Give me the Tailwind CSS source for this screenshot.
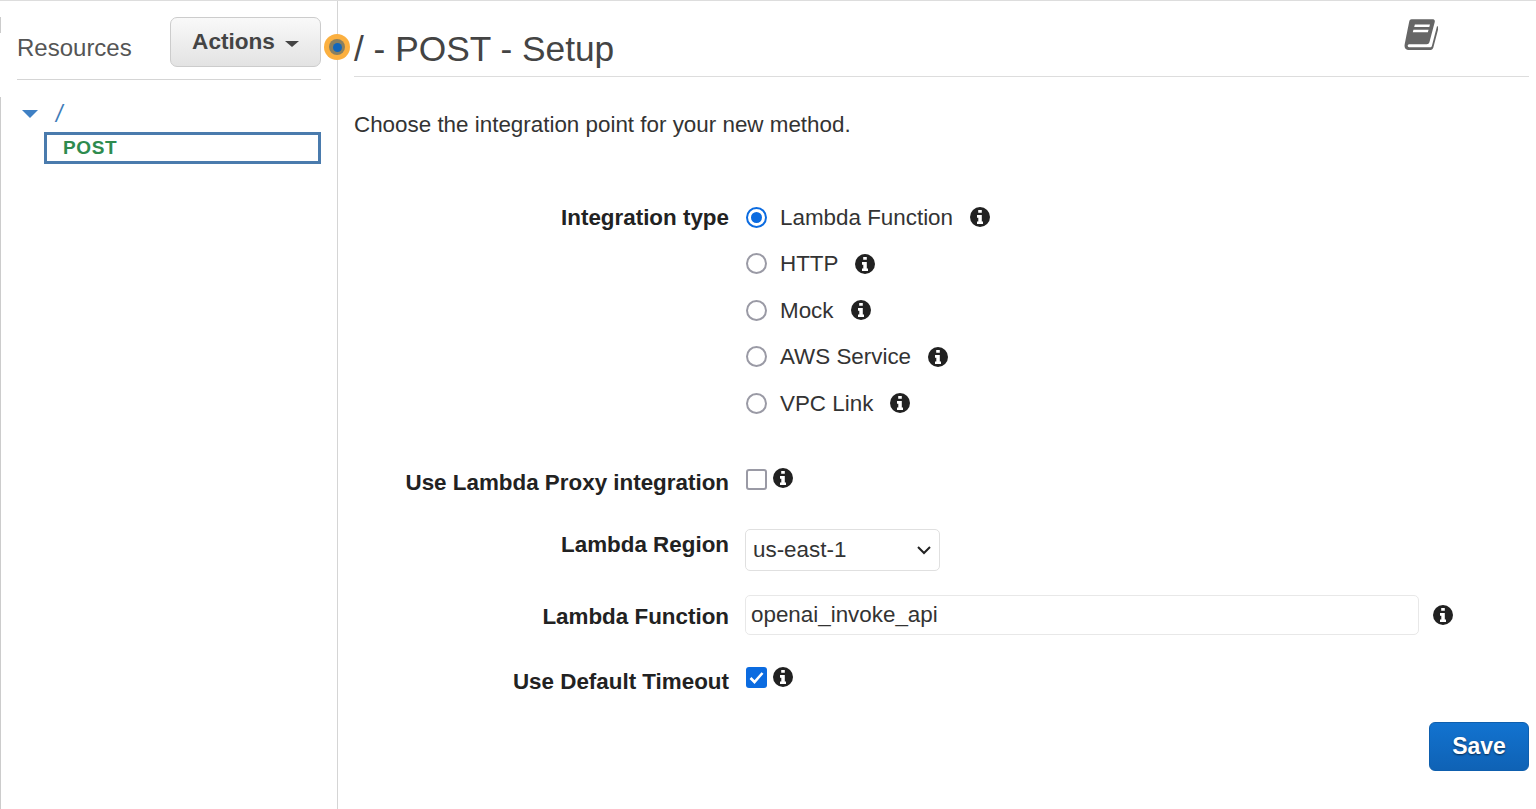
<!DOCTYPE html>
<html lang="en">
<head>
  <meta charset="UTF-8" />
  <title>API Gateway - POST Setup</title>
  <script src="https://cdn.jsdelivr.net/npm/@tailwindcss/browser@4"></script>
</head>
<body class="bg-white h-[809px] overflow-hidden font-['Liberation_Sans',Arial,sans-serif] text-[#222]">

<svg class="hidden">
  <symbol id="info" viewBox="0 0 20 20">
    <circle cx="10" cy="10" r="10" fill="#212121" />
    <path fill="#fff" d="M8.2 2.9h3.6v2.9H8.2zM7 8h4.8v6.4H13v2.7H7v-2.700h1.300v-3.700H7z" />
  </symbol>
</svg>

<div class="flex h-full border-t border-[#ddd]">
  <!-- resources tree -->
  <aside class="relative w-[338px] shrink-0 h-full pl-[17px] pr-4 pt-4 border-r border-[#d5d5d5]">
    <div class="absolute left-0 top-4 w-px h-4 bg-[#ccc]"></div>
    <div class="absolute left-0 top-24 bottom-0 w-px bg-[#ccc]"></div>
    <div class="flex items-center justify-between h-[63px] border-b border-[#d5d5d5] pb-[13px]">
      <span class="text-[24px] text-[#555] mt-[13px]">Resources</span>
      <button class="w-[151px] h-[50px] mt-0 rounded-[7px] border border-[#ccc] bg-gradient-to-b from-[#f9f9f9] to-[#e3e3e3] text-[22.600px] font-bold text-[#444] flex items-center justify-center gap-[10px]">
        Actions
        <span class="w-0 h-0 border-x-[7px] border-x-transparent border-t-[6px] border-t-[#444] mt-[4px]"></span>
      </button>
    </div>
    <div class="flex items-center h-[36px] mt-[16px] pl-[5px]">
      <span class="w-0 h-0 border-x-[8px] border-x-transparent border-t-[8px] border-t-[#3f80c4]"></span>
      <span class="ml-[18px] text-[23px] italic text-[#3f7cb8]">/</span>
    </div>
    <div class="ml-[27px] h-[32px] border-[3px] border-[#4a7bad] flex items-center pl-[16px]">
      <span class="text-[19px] font-bold text-[#2e8b4e] tracking-[0.6px]">POST</span>
    </div>
    <!-- focus dot over the divider -->
    <div class="absolute right-[-13px] top-[33px] z-10 w-[26px] h-[26px] rounded-full bg-[#fbb040] flex items-center justify-center">
      <div class="w-[16px] h-[16px] rounded-full bg-[#8a8060] flex items-center justify-center">
        <div class="w-[9px] h-[9px] rounded-full bg-[#1166bb]"></div>
      </div>
    </div>
  </aside>

  <main class="flex-1 pl-4 pr-[7px]">
    <div class="flex items-start justify-between h-[76px] border-b border-[#ddd]">
      <h2 class="text-[35.300px] text-[#444] mt-[26px] leading-[44px]">/ - POST - Setup</h2>
      <svg class="w-[34px] h-[32px] mt-[17px] mr-[91px]" viewBox="0 0 36 33">
        <path fill="#666" d="M8 1h22c2 0 3 1 2.500 3l-5.500 21c-.5 1.600-1.500 2.300-3 2.300H6c-1.500 0-2.300 .8-2 2s1 1.300 2.500 1.300h21c1 0 1.800-.6 2-1.500l5.500-21 1 .6c.5 .4 .6 1 .4 1.800l-5.400 20.500c-.5 1.600-1.800 2.500-3.500 2.500H5c-3 0-5-2.500-4.300-5.500C1.200 25 5 6 5.500 3.500 5.900 1.800 6.800 1 8 1z" />
        <path fill="#fff" d="M11.500 6.500h16l-.7 2.600h-16zM10 12h16l-.7 2.600h-16z" />
      </svg>
    </div>

    <p class="text-[22.400px] text-[#333] mt-[33px] leading-[30px]">Choose the integration point for your new method.</p>

    <div class="grid grid-cols-[375px_1fr] gap-x-[17px] mt-[54px] text-[22.400px] text-[#333]">
      <div class="h-[46.500px] flex items-center justify-end font-bold text-[#222] pt-[2px]">Integration type</div>
      <div>
        <label class="h-[46.500px] flex items-center">
          <span class="w-[21px] h-[21px] rounded-full border-[2px] border-[#0b6be0] flex items-center justify-center"><span class="w-[11px] h-[11px] rounded-full bg-[#0b6be0]"></span></span>
          <span class="ml-[13px] pt-[1px]">Lambda Function</span>
          <svg class="w-5 h-5 ml-[17px]"><use href="#info" /></svg>
        </label>
        <label class="h-[46.500px] flex items-center">
          <span class="w-[21px] h-[21px] rounded-full border-[2.500px] border-[#9a9aa5]"></span>
          <span class="ml-[13px] pt-[1px]">HTTP</span>
          <svg class="w-5 h-5 ml-[17px]"><use href="#info" /></svg>
        </label>
        <label class="h-[46.500px] flex items-center">
          <span class="w-[21px] h-[21px] rounded-full border-[2.500px] border-[#9a9aa5]"></span>
          <span class="ml-[13px] pt-[1px]">Mock</span>
          <svg class="w-5 h-5 ml-[17px]"><use href="#info" /></svg>
        </label>
        <label class="h-[46.500px] flex items-center">
          <span class="w-[21px] h-[21px] rounded-full border-[2.500px] border-[#9a9aa5]"></span>
          <span class="ml-[13px] pt-[1px]">AWS Service</span>
          <svg class="w-5 h-5 ml-[17px]"><use href="#info" /></svg>
        </label>
        <label class="h-[46.500px] flex items-center">
          <span class="w-[21px] h-[21px] rounded-full border-[2.500px] border-[#9a9aa5]"></span>
          <span class="ml-[13px] pt-[1px]">VPC Link</span>
          <svg class="w-5 h-5 ml-[17px]"><use href="#info" /></svg>
        </label>
      </div>

      <div class="h-[44px] mt-[33px] flex items-center justify-end font-bold text-[#222] pt-[2px]">Use Lambda Proxy integration</div>
      <div class="h-[44px] mt-[33px] flex items-start pt-[9px]">
        <span class="w-[21px] h-[21px] rounded-[3px] border-[2.500px] border-[#9a9aa5]"></span>
        <svg class="w-5 h-5 ml-[6px] -mt-[1px]"><use href="#info" /></svg>
      </div>

      <div class="h-[42px] mt-[24px] flex items-start justify-end font-bold text-[#222]">Lambda Region</div>
      <div class="h-[42px] mt-[25px]">
        <div class="w-[195px] h-[42px] -ml-px rounded-[5px] border border-[#e0e0e0] flex items-center justify-between pl-[7px] pr-[7px]">
          <span>us-east-1</span>
          <svg class="w-[16px] h-[10px]" viewBox="0 0 16 10" fill="none" stroke="#222" stroke-width="2"><path d="M2 2l6 6 6-6" /></svg>
        </div>
      </div>

      <div class="h-[40px] mt-[24px] flex items-center justify-end font-bold text-[#222] pt-[5px]">Lambda Function</div>
      <div class="h-[40px] mt-[24px] flex items-center">
        <input value="openai_invoke_api" class="w-[674px] h-[40px] -ml-px rounded-[5px] border border-[#e8e8e8] px-[5px] text-[22.400px] text-[#333] outline-none" />
        <svg class="w-5 h-5 ml-[14px]"><use href="#info" /></svg>
      </div>

      <div class="h-[36px] mt-[26px] flex items-center justify-end font-bold text-[#222] pt-[6px]">Use Default Timeout</div>
      <div class="h-[36px] mt-[26px] flex items-start pt-[6px]">
        <span class="w-[21px] h-[21px] rounded-[3px] bg-[#0b6be0] flex items-center justify-center">
          <svg class="w-[15px] h-[13px]" viewBox="0 0 15 13" fill="none" stroke="#fff" stroke-width="2.600"><path d="M1.500 7l4 4 8-9" /></svg>
        </span>
        <svg class="w-5 h-5 ml-[6px]"><use href="#info" /></svg>
      </div>
    </div>

    <div class="flex justify-end mt-[25px]">
      <button class="w-[100px] h-[49px] rounded-[6px] bg-gradient-to-b from-[#1273d0] to-[#0f62b5] border border-[#0e5fae] text-white text-[23px] font-bold [text-shadow:0_1px_2px_rgba(0,0,0,0.6)]">Save</button>
    </div>
  </main>
</div>
</body>
</html>
